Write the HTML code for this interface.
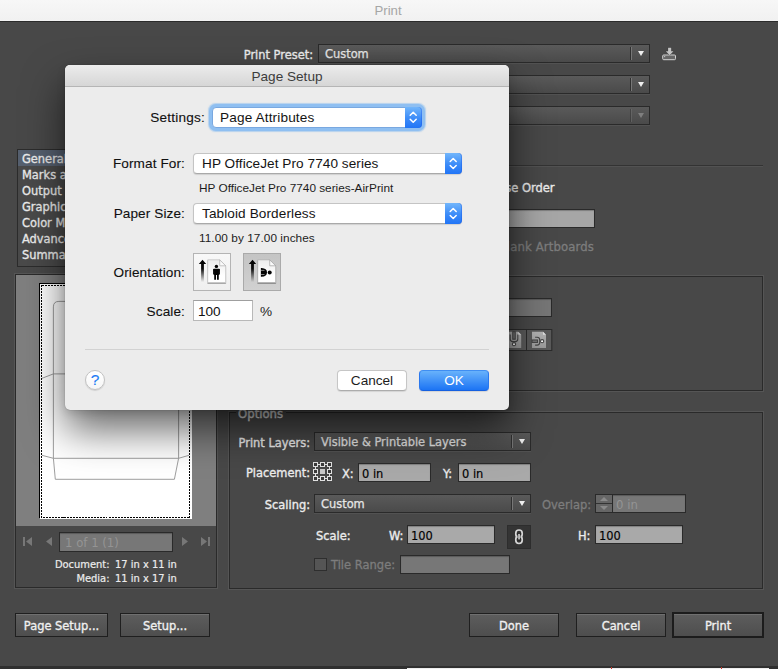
<!DOCTYPE html>
<html lang="en">
<head>
<meta charset="utf-8">
<title>Print</title>
<style>
*{box-sizing:border-box;margin:0;padding:0}
html,body{width:778px;height:669px;overflow:hidden;background:#484848}
body{position:relative;font-family:"DejaVu Sans Condensed","DejaVu Sans","Liberation Sans",sans-serif;font-size:12px;color:#f0f0f0;-webkit-font-smoothing:antialiased}
.abs{position:absolute}
.a{position:absolute;white-space:nowrap}
/* ---------- window chrome ---------- */
#titlebar{left:0;top:0;width:778px;height:22px;background:linear-gradient(#f7f7f7,#f1f1f1);border-bottom:1px solid #2b2b2b}
#titlebar span{position:absolute;left:-1px;width:778px;text-align:center;top:3px;font-family:"Liberation Sans",sans-serif;font-size:13.2px;color:#a6a6a6}
/* ---------- dark widgets ---------- */
.lbl{margin-top:1px;font-size:12.7px;color:#ececec;-webkit-text-stroke:.35px #ececec}
.lbl.dim{color:#7d7d7d;-webkit-text-stroke:.3px #7d7d7d}
.r{text-align:right}
.dd{position:absolute;height:19px;border:1px solid #2a2a2a;background:linear-gradient(#5a5a5a,#4a4a4a);color:#e6e6e6;font-size:12.7px;line-height:17px;padding-left:6px;-webkit-text-stroke:.25px #e6e6e6;white-space:nowrap;box-shadow:0 1px 0 rgba(255,255,255,.06)}
.dd i{position:absolute;right:17px;top:2px;width:1px;height:13px;background:#777;box-shadow:-1px 0 0 #303030}
.dd b{position:absolute;right:5px;top:6px;width:0;height:0;border-left:3.5px solid transparent;border-right:3.5px solid transparent;border-top:5px solid #efefef}
.dd.dis b{border-top-color:#7f7f7f}
.dd.dis i{opacity:.45}
.fld{position:absolute;height:20px;border:1px solid #2a2a2a;background:#a9a9a9;color:#000;-webkit-text-stroke:.15px #000;font-size:12.7px;line-height:19px;padding-left:3px;white-space:nowrap;box-shadow:inset 0 1px 1px rgba(0,0,0,.25)}
.fld.dis{background:#777;color:#949494;-webkit-text-stroke:0}
.btn{position:absolute;height:24px;border:1px solid #1f1f1f;background:linear-gradient(#5d5d5d,#4e4e4e);color:#efefef;font-size:12.7px;-webkit-text-stroke:.35px #efefef;text-align:center;line-height:23px;box-shadow:inset 0 1px 0 rgba(255,255,255,.12);white-space:nowrap}
.grp{position:absolute;border:1px solid #2a2a2a;box-shadow:0 0 0 1px rgba(255,255,255,.075)}
/* ---------- sheet ---------- */
#sheet{left:65px;top:65px;width:444px;height:345px;background:#ececec;border-radius:5px 5px 5px 5px;box-shadow:0 0 1px rgba(0,0,0,.45),0 20px 40px rgba(0,0,0,.6),0 3px 8px rgba(0,0,0,.12);font-family:"Liberation Sans",sans-serif;color:#1a1a1a;font-size:13px}
#sheet .tb{position:absolute;left:0;top:0;width:444px;height:22px;border-radius:5px 5px 0 0;background:linear-gradient(#ececec,#d6d6d6);border-bottom:1px solid #b5b5b5;text-align:center;line-height:23px;color:#3c3c3c;font-size:13.6px}
.sl{position:absolute;text-align:right;font-size:13.6px;color:#101010;white-space:nowrap;margin-top:1px;-webkit-text-stroke:.1px #101010;letter-spacing:.1px}
.pop{position:absolute;height:21px;background:#fff;border-radius:4px;border:1px solid #c4c4c4;border-bottom-color:#a9a9a9;box-shadow:0 1px 1px rgba(0,0,0,.12);font-size:13.6px;line-height:19px;padding-left:8px;color:#141414;white-space:nowrap}
.pop .cap{position:absolute;right:-1px;top:-1px;width:17px;height:21px;border-radius:0 4px 4px 0;background:linear-gradient(#72b6fb,#3c8bf8 55%,#2175f6);box-shadow:inset -1px 0 0 rgba(20,80,230,.35)}
.pop .cap svg{position:absolute;left:0;top:0}
.small{position:absolute;font-size:11.8px;color:#1c1c1c;white-space:nowrap}

.ci{height:16px;line-height:17px;padding-left:4px;font-size:12.7px;color:#ececec;white-space:nowrap;-webkit-text-stroke:.3px #ececec}
.ci.sel{background:#56606f}
.doc{margin-top:1px;font-size:11px;color:#ececec;-webkit-text-stroke:.2px #ececec}
.tri{position:absolute;left:4px;width:0;height:0;border-left:4px solid transparent;border-right:4px solid transparent}
.tri.up{top:2px;border-bottom:4px solid #8a8a8a}
.tri.dn{top:11px;border-top:4px solid #8a8a8a}
.btn.def{border:2px solid #1c1c1c}

.pop.focus{box-shadow:0 0 0 3px #8fbff1,0 0 1px 3.500px rgba(130,185,240,.5);border-color:#79a8e0}
.ob{position:absolute;width:38px;height:38px;border:1px solid #b4b4b4;background:linear-gradient(#f8f8f8,#efefef)}
.ob svg{position:absolute;left:-1px;top:-1px}
.ob.on{background:linear-gradient(#c4c4c4,#d1d1d1);border-color:#aaa}
.mb{position:absolute;height:21px;border-radius:4px;background:#fff;border:1px solid #c6c6c6;border-bottom-color:#acacac;box-shadow:0 1px 1px rgba(0,0,0,.1);text-align:center;font-size:13.600px;line-height:19px;color:#1c1c1c}
.mb.ok{background:linear-gradient(#68b2fb,#1c74f4);border-color:#3f8ef2 #2a78ee #1560e0;color:#fff}
</style>
</head>
<body>
<!-- ======= Print dialog (background) ======= -->
<div id="titlebar" class="abs"><span>Print</span></div>

<div id="dark">
<!-- top dropdowns -->
<div class="a lbl r" style="left:200px;width:113px;top:46px">Print Preset:</div>
<div class="dd" style="left:318px;top:44px;width:332px">Custom<i></i><b></b></div>
<svg class="abs" style="left:661px;top:46px" width="16" height="15" viewBox="0 0 16 15"><rect x="1.700" y="9" width="12.800" height="4.700" rx="1" fill="#676767" stroke="#d2d2d2" stroke-width="1"/><rect x="3" y="10.300" width="1.200" height=".8" fill="#ddd"/><path d="M7.100 1.800h3.100v3.400h2.300l-3.850 4-3.850-4h2.300z" fill="#c4c4c4" stroke="#3c3c3c" stroke-width=".8" paint-order="stroke"/></svg>
<div class="a lbl r" style="left:200px;width:113px;top:77px">Printer:</div>
<div class="dd" style="left:318px;top:75px;width:332px">HP OfficeJet Pro 7740 series<i></i><b></b></div>
<div class="a lbl r dim" style="left:200px;width:113px;top:108px">PPD:</div>
<div class="dd dis" style="left:318px;top:106px;width:332px"><i></i><b></b></div>

<!-- category list -->
<div class="abs" id="cat" style="left:17px;top:149px;width:199px;height:118px;border:1px solid #2c2c2c;background:#4a4a4a">
  <div class="ci sel">General</div><div class="ci">Marks and Bleed</div><div class="ci">Output</div><div class="ci">Graphics</div><div class="ci">Color Management</div><div class="ci">Advanced</div><div class="ci">Summary</div>
</div>

<!-- preview panel -->
<div class="grp" style="left:15px;top:274px;width:202px;height:314px"></div>
<div class="abs" style="left:16px;top:275px;width:200px;height:251px;background:#7f7f7f"></div>
<div class="abs" id="paper" style="left:40px;top:284px;width:152px;height:235px;background:#fff;box-shadow:-1px -1px 0 0 #000">
  <svg width="152" height="235" viewBox="0 0 152 235" style="position:absolute;left:0;top:0">
    <rect x="1.500" y="1.500" width="148" height="232" fill="none" stroke="#000" stroke-width="1" stroke-dasharray="2 1" shape-rendering="crispEdges"/>
    <g fill="none" stroke="#939393" stroke-width="0.9">
      <path d="M13.400 174.300V22.900q0-5.500 5.500-5.500h114.200q5.500 0 5.500 5.500v151.400"/>
      <path d="M2 94.300l11.400 -4.400h125.200l10.400 4.400"/>
      <path d="M2 171.300l11.400 3h125.200l10.400 -3"/>
      <path d="M13.400 174.300l1.900 21h119.100l4.200 -21"/>
    </g>
  </svg>
</div>
<!-- pager -->
<svg class="abs" style="left:22px;top:536px" width="34" height="12" viewBox="0 0 34 12"><g fill="#777"><rect x="1" y="1" width="2" height="9"/><path d="M10 1v9l-6-4.500z"/><path d="M30 1v9l-6-4.500z"/></g></svg>
<div class="fld dis" style="left:59px;top:532px;width:114px;height:20px;font-size:13px;line-height:19px;padding-left:5px">1 of 1 (1)</div>
<svg class="abs" style="left:178px;top:536px" width="34" height="12" viewBox="0 0 34 12"><g fill="#777"><path d="M4 1v9l6-4.500z"/><path d="M23 1v9l6-4.500z"/><rect x="30" y="1" width="2" height="9"/></g></svg>
<div class="a doc" style="left:17px;width:92.500px;text-align:right;top:557px">Document:</div><div class="a doc" style="left:115px;top:557px">17 in x 11 in</div>
<div class="a doc" style="left:17px;width:92.500px;text-align:right;top:571px">Media:</div><div class="a doc" style="left:115px;top:571px">11 in x 17 in</div>

<!-- general panel (mostly hidden behind sheet) -->
<div class="a lbl" style="left:231px;top:149px;font-size:13px">General</div>
<div class="abs" style="left:230px;top:165px;width:533px;height:1px;background:#333;box-shadow:0 1px 0 rgba(255,255,255,.06)"></div>
<div class="a lbl r" style="left:238px;width:70px;top:179px">Copies:</div>
<div class="fld" style="left:314px;top:178px;width:60px">1</div>
<div class="a lbl" style="left:405px;top:179px;font-size:13px">Collate</div>
<div class="a lbl" style="left:472px;top:179px;font-size:12.800px">Reverse Order</div>
<div class="a lbl r" style="left:238px;width:70px;top:210px">Artboards:</div>
<div class="a lbl" style="left:330px;top:210px">All</div>
<div class="a lbl" style="left:380px;top:210px">Range:</div>
<div class="fld" style="left:430px;top:209px;width:165px;height:19px;background:linear-gradient(90deg,#8a8a8a,#a6a6a6 60%)">1</div>
<div class="a lbl dim" style="left:330px;top:238px;font-size:13px">Ignore Artboards</div>
<div class="a lbl dim r" style="left:394px;width:200px;top:238px;font-size:13px;letter-spacing:.12px">Skip Blank Artboards</div>

<!-- media group -->
<div class="grp" style="left:230px;top:276px;width:533px;height:115px"></div>
<div class="a lbl" style="left:238px;top:268px;background:#484848;padding:0 2px">Media Size</div>
<div class="fld dis" style="left:430px;top:298px;width:122px;height:19px;background:linear-gradient(90deg,#5f5f5f,#767676 70%)"></div>
<svg class="abs" style="left:500px;top:329px" width="53" height="22" viewBox="0 0 53 22">
  <defs><linearGradient id="mp" x1="0" y1="0" x2="0" y2="1"><stop offset="0" stop-color="#b4b4b4"/><stop offset="1" stop-color="#9a9a9a"/></linearGradient></defs>
  <rect x=".5" y=".5" width="51.300" height="21" fill="#5a5a5a" stroke="#2b2b2b"/>
  <path d="M26.500 .5v21" stroke="#2b2b2b"/>
  <path d="M6 2.700h12.200l3 3v13.300h-15.200z" fill="url(#mp)"/><path d="M18.200 2.700v3h3z" fill="#e0e0e0"/>
  <path d="M32 2.700h11l3 3v13.300h-14z" fill="url(#mp)"/><path d="M43 2.700v3h3z" fill="#e0e0e0"/>
  <g stroke="#454545" stroke-width="1.100">
    <rect x="12.800" y="2.700" width="2.400" height="7.500" fill="#7c7c7c"/>
    <path d="M10.200 5.500v4.500q0 2.600 2.600 2.600h2.400q2.600 0 2.600 -2.600v-4.500" fill="none"/>
    <circle cx="14" cy="15.200" r="1.600" fill="#fff"/>
    <rect x="32" y="11" width="5.500" height="2.400" fill="#7c7c7c"/>
    <path d="M35.100 8.300h2q2.600 0 2.600 2.600v2.600q0 2.600 -2.600 2.600h-2" fill="none"/>
    <circle cx="42.100" cy="12.200" r="1.600" fill="#fff"/>
  </g>
</svg>
<!-- options group -->
<div class="grp" style="left:229px;top:412px;width:534px;height:177px"></div>
<div class="a lbl" style="left:236px;top:405px;background:#484848;padding:0 3px 0 2px;color:#cfcfcf;font-size:13px">Options</div>
<div class="a lbl r" style="left:201px;width:109px;top:434px">Print Layers:</div>
<div class="dd" style="left:314px;top:432px;width:217px">Visible &amp; Printable Layers<i></i><b></b></div>
<div class="a lbl r" style="left:201px;width:109px;top:464px">Placement:</div>
<svg class="abs" style="left:313px;top:462px" width="20" height="20" viewBox="0 0 20 20"><g fill="#3a3a3a" stroke="#e2e2e2" stroke-width="1"><rect x="0.5" y="0.5" width="4" height="4"/><rect x="7.5" y="0.5" width="4" height="4"/><rect x="14.5" y="0.5" width="4" height="4"/><rect x="0.5" y="7.5" width="4" height="4"/><rect x="14.5" y="7.5" width="4" height="4"/><rect x="0.5" y="14.5" width="4" height="4"/><rect x="7.5" y="14.5" width="4" height="4"/><rect x="14.5" y="14.5" width="4" height="4"/><path d="M5 2.500h2M12 2.500h2M5 16.500h2M12 16.500h2M2.500 5v2M2.500 12v2M16.500 5v2M16.500 12v2"/></g><rect x="7" y="7" width="5" height="5" fill="#c9c9c9"/></svg>
<div class="a lbl" style="left:342px;top:465px">X:</div>
<div class="fld" style="left:358px;top:463px;width:73px;height:19px">0 in</div>
<div class="a lbl" style="left:443px;top:465px">Y:</div>
<div class="fld" style="left:458px;top:463px;width:73px;height:19px">0 in</div>
<div class="a lbl r" style="left:201px;width:109px;top:496px">Scaling:</div>
<div class="dd" style="left:314px;top:494px;width:217px">Custom<i></i><b></b></div>
<div class="a lbl dim" style="left:542px;top:496px;font-size:12.800px">Overlap:</div>
<div class="abs" style="left:595px;top:494px;width:18px;height:19px;border:1px solid #2a2a2a;background:#666"><span style="position:absolute;left:0;top:8px;width:16px;height:1px;background:#333"></span><span class="tri up"></span><span class="tri dn"></span></div>
<div class="fld dis" style="left:612px;top:494px;width:74px;height:19px;font-size:13px;line-height:19px;padding-left:3px">0 in</div>
<div class="a lbl" style="left:316px;top:527px">Scale:</div>
<div class="a lbl" style="left:389px;top:527px">W:</div>
<div class="fld" style="left:407px;top:525px;width:88px;height:19px">100</div>
<div class="abs" style="left:507px;top:525px;width:24px;height:24px;background:#343434;border:1px solid #2d2d2d"></div>
<svg class="abs" style="left:513px;top:528px" width="12" height="17" viewBox="0 0 12 17"><g fill="none" stroke="#d6d6d6" stroke-width="1.700"><rect x="2.800" y="2" width="6.400" height="7.500" rx="3.200"/><rect x="2.800" y="8" width="6.400" height="7.500" rx="3.200"/></g><rect x="4.600" y="5" width="2.800" height="7.400" fill="#1c1c1c"/><rect x="5.200" y="5.800" width="1.700" height="5.800" rx=".5" fill="#cfcfcf"/></svg>
<div class="a lbl" style="left:578px;top:527px">H:</div>
<div class="fld" style="left:595px;top:525px;width:88px;height:19px">100</div>
<div class="abs" style="left:314px;top:558px;width:13px;height:13px;border:1px solid #2e2e2e;background:#555"></div>
<div class="a lbl dim" style="left:331px;top:556px;font-size:12.800px">Tile Range:</div>
<div class="fld dis" style="left:400px;top:555px;width:110px;height:19px"></div>

<!-- bottom buttons -->
<div class="btn" style="left:15px;top:613px;width:93px">Page Setup...</div>
<div class="btn" style="left:120px;top:613px;width:90px">Setup...</div>
<div class="btn" style="left:469px;top:613px;width:90px">Done</div>
<div class="btn" style="left:576px;top:613px;width:90px">Cancel</div>
<div class="btn def" style="left:672px;top:612px;width:92px;height:26px;line-height:23px">Print</div>
<div class="abs" style="left:0;top:666px;width:778px;height:3px;background:#303030"></div>
<div class="abs" style="left:407px;top:668px;width:362px;height:1px;background:#ededed"></div>
<div class="abs" style="left:611px;top:667px;width:1px;height:2px;background:#c0392b"></div>
<div class="abs" style="left:721px;top:667px;width:1px;height:2px;background:#c0392b"></div>
</div>

<!-- ======= Page Setup sheet ======= -->
<div id="sheet" class="abs">
<div class="tb">Page Setup</div>
<!-- Settings -->
<div class="sl" style="left:40px;width:100px;top:44px;letter-spacing:.22px">Settings:</div>
<div class="pop focus" style="left:147px;top:42px;width:210px;height:21px;line-height:20px;padding-left:7px"><span style="letter-spacing:.15px">Page Attributes</span><span class="cap"><svg width="17" height="21" viewBox="0 0 17 21"><path d="M5.200 8.300l3-3 3 3M5.200 12.300l3 3 3-3" fill="none" stroke="#fff" stroke-width="1.500" stroke-linecap="round" stroke-linejoin="round"/></svg></span></div>
<!-- Format For -->
<div class="sl" style="left:20px;width:100px;top:90px">Format For:</div>
<div class="pop" style="left:128px;top:88px;width:269px"><span style="letter-spacing:.06px">HP OfficeJet Pro 7740 series</span><span class="cap"><svg width="17" height="21" viewBox="0 0 17 21"><path d="M5.200 8.500l3-3 3 3M5.200 12.500l3 3 3-3" fill="none" stroke="#fff" stroke-width="1.500" stroke-linecap="round" stroke-linejoin="round"/></svg></span></div>
<div class="small" style="left:134px;top:116px">HP OfficeJet Pro 7740 series-AirPrint</div>
<!-- Paper Size -->
<div class="sl" style="left:20px;width:100px;top:140px">Paper Size:</div>
<div class="pop" style="left:128px;top:138px;width:269px"><span style="letter-spacing:.1px">Tabloid Borderless</span><span class="cap"><svg width="17" height="21" viewBox="0 0 17 21"><path d="M5.200 8.500l3-3 3 3M5.200 12.500l3 3 3-3" fill="none" stroke="#fff" stroke-width="1.500" stroke-linecap="round" stroke-linejoin="round"/></svg></span></div>
<div class="small" style="left:134px;top:166px;letter-spacing:.06px">11.00 by 17.00 inches</div>
<!-- Orientation -->
<div class="sl" style="left:20px;width:100px;top:199px">Orientation:</div>
<div class="ob" style="left:128px;top:188px">
  <svg width="38" height="38" viewBox="0 0 38 38"><defs><linearGradient id="ag" x1="0" y1="0" x2="0" y2="1"><stop offset="0" stop-color="#000"/><stop offset=".4" stop-color="#0a0a0a"/><stop offset="1" stop-color="#111" stop-opacity="0"/></linearGradient><linearGradient id="pg" x1="0" y1="0" x2="0" y2="1"><stop offset="0" stop-color="#ececec"/><stop offset=".7" stop-color="#fff"/></linearGradient><filter id="ps" x="-20%" y="-20%" width="140%" height="150%"><feDropShadow dx="0" dy="1" stdDeviation=".7" flood-color="#000" flood-opacity=".35"/></filter></defs>
    <path d="M9.500 6.800l3.700 4.300h-2.300v18h-2.800v-18h-2.300z" fill="url(#ag)"/>
    <path d="M14.700 6.800h12l6 6v16.700h-18z" fill="url(#pg)" stroke="#bdbdbd" stroke-width=".7" filter="url(#ps)"/>
    <path d="M26.700 6.800v6h6z" fill="#fafafa" stroke="#b0b0b0" stroke-width=".7"/>
    <circle cx="23.400" cy="13.400" r="1.700" fill="#050505"/>
    <path d="M20 16.800q0-1 1-1h5q1 0 1 1v4.800h-.9v-4.400h-.3v9.600h-1.800v-5.400h-1v5.400h-1.800v-9.600h-.3v4.400h-.9z" fill="#050505"/>
    <rect x="21.100" y="16" width="4.800" height="6" fill="#050505"/>
  </svg>
</div>
<div class="ob on" style="left:178px;top:188px">
  <svg width="38" height="38" viewBox="0 0 38 38">
    <path d="M9.500 6.800l3.700 4.300h-2.300v18h-2.800v-18h-2.300z" fill="url(#ag)"/>
    <path d="M14.700 6.800h12l6 6v16.700h-18z" fill="url(#pg)" stroke="#a8a8a8" stroke-width=".7" filter="url(#ps)"/>
    <path d="M26.700 6.800v6h6z" fill="#fafafa" stroke="#a0a0a0" stroke-width=".7"/>
    <circle cx="26.700" cy="19.400" r="2" fill="#050505"/>
    <path d="M17.900 15h.6q5.500 .4 5.500 4.400t-5.500 4.400h-.6z" fill="#050505"/>
    <path d="M17.900 17.400h3.600M17.900 21.500h3.600" stroke="#e8e8e8" stroke-width=".55"/>
  </svg>
</div>
<!-- Scale -->
<div class="sl" style="left:20px;width:100px;top:238px">Scale:</div>
<div class="abs" style="left:128px;top:235px;width:60px;height:21px;background:#fff;border:1px solid #b8b8b8;border-top-color:#9f9f9f;font-size:13.600px;line-height:22px;padding-left:4px;color:#111">100</div>
<div class="abs" style="left:195px;top:239px;font-size:13.600px;color:#1c1c1c">%</div>
<!-- footer -->
<div class="abs" style="left:20px;top:284px;width:404px;height:1px;background:#d2d2d2"></div>
<div class="abs" style="left:20px;top:305px;width:20px;height:20px;border-radius:50%;background:linear-gradient(#fff,#f6f6f6);border:1px solid #c2c2c2;box-shadow:0 1px 1px rgba(0,0,0,.12);text-align:center;line-height:18px;font-size:15.500px;color:#1b7bf5;-webkit-text-stroke:.12px #1b7bf5">?</div>
<div class="mb" style="left:272px;top:305px;width:70px">Cancel</div>
<div class="mb ok" style="left:354px;top:305px;width:70px">OK</div>
</div>
</body>
</html>
